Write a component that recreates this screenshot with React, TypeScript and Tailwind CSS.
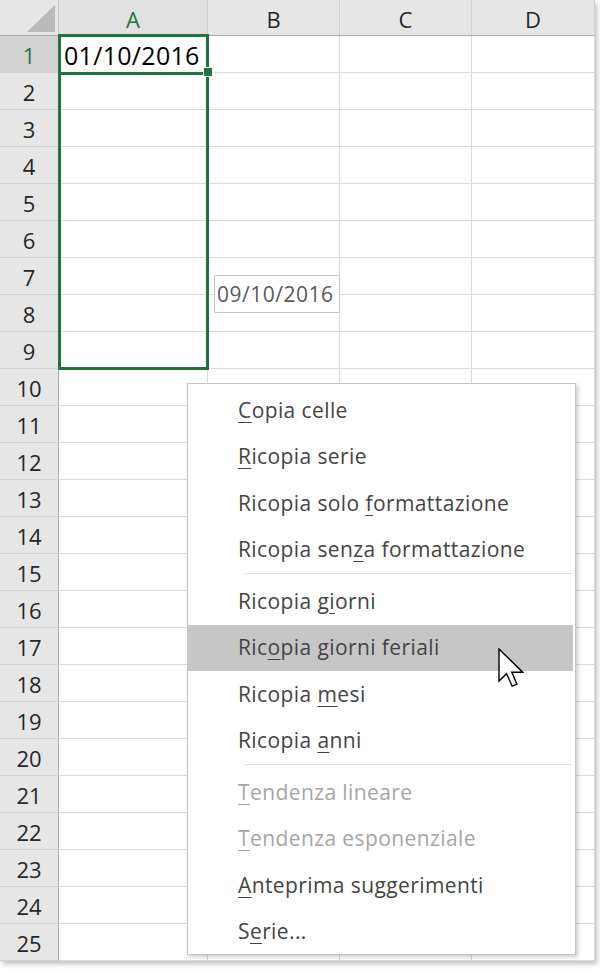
import React from 'react';

type Item = { pre: string; key: string; post: string; disabled?: boolean; active?: boolean } | 'sep';

const menuItems: Item[] = [
  { pre: '', key: 'C', post: 'opia celle' },
  { pre: '', key: 'R', post: 'icopia serie' },
  { pre: 'Ricopia solo ', key: 'f', post: 'ormattazione' },
  { pre: 'Ricopia sen', key: 'z', post: 'a formattazione' },
  'sep',
  { pre: 'Ricopia g', key: 'i', post: 'orni' },
  { pre: 'Ric', key: 'o', post: 'pia giorni feriali', active: true },
  { pre: 'Ricopia ', key: 'm', post: 'esi' },
  { pre: 'Ricopia ', key: 'a', post: 'nni' },
  'sep',
  { pre: '', key: 'T', post: 'endenza lineare', disabled: true },
  { pre: '', key: 'T', post: 'endenza esponenziale', disabled: true },
  { pre: '', key: 'A', post: 'nteprima suggerimenti' },
  { pre: 'S', key: 'e', post: 'rie...' },
];

const columns = [
  { name: 'A', w: 'w-[149px]' },
  { name: 'B', w: 'w-[132px]' },
  { name: 'C', w: 'w-[132px]' },
  { name: 'D', w: 'w-[123px]' },
];

const rows = Array.from({ length: 25 }, (_, i) => i + 1);

const Cursor = () => (
  <svg width="26" height="40" viewBox="-0.5 -0.5 13 20" className="absolute left-[498px] top-[648px]">
    <path
      d="M0 0 L0 16 L3.8 12.4 L6.6 18.6 L9 17.6 L6.4 11.6 L11.8 11.6 Z"
      fill="white"
      stroke="black"
      strokeWidth="0.7"
      strokeLinejoin="miter"
    />
  </svg>
);

export default function App() {
  return (
    <div className="w-[600px] h-[972px] bg-white font-['Open_Sans',sans-serif]">
      <div className="relative w-[595px] h-[961px] overflow-hidden bg-white shadow-[2px_3px_5px_rgba(0,0,0,0.25)]">
        {/* column headers */}
        <div className="flex h-[36px] bg-[#e6e6e6] border-b border-[#ababab]">
          <div className="relative w-[59px] border-r border-[#c8c8c8]">
            <svg width="28" height="27" viewBox="0 0 28 27" className="absolute left-[27px] top-[5px]">
              <polygon points="0,27 28,27 28,0" fill="#b9b9b9" />
            </svg>
          </div>
          {columns.map((c) => (
            <div
              key={c.name}
              className={`${c.w} flex items-center justify-center pt-[3px] border-r border-[#d0d0d0] text-[22px] ${
                c.name === 'A' ? 'bg-[#e1e1e1] text-[#217346]' : 'text-[#262626]'
              }`}
            >
              {c.name}
            </div>
          ))}
        </div>

        {/* rows */}
        {rows.map((r) => (
          <div key={r} className="flex h-[37px]">
            <div
              className={`w-[59px] flex items-center justify-center pt-[3px] border-r border-r-[#ababab] border-b border-b-[#d0d0d0] text-[22px] ${
                r === 1 ? 'bg-[#d2d2d2] text-[#217346]' : 'bg-[#e6e6e6] text-[#262626]'
              }`}
            >
              {r}
            </div>
            {columns.map((c) => (
              <div key={c.name} className={`${c.w} flex items-center border-r border-b border-[#dadada]`}>
                {r === 1 && c.name === 'A' && (
                  <span className="pl-[5px] pt-[3px] text-[25px] tracking-[0.3px] text-black leading-none">
                    01/10/2016
                  </span>
                )}
              </div>
            ))}
          </div>
        ))}

        {/* selection */}
        <div className="absolute left-[58px] top-[34px] w-[151px] h-[336px] border-[3px] border-[#217346]" />
        <div className="absolute left-[58px] top-[72px] w-[151px] h-[3px] bg-[#217346]" />
        <div className="absolute left-[203px] top-[67px] w-[10px] h-[10px] bg-[#217346] border border-white" />

        {/* fill tooltip */}
        <div className="absolute left-[214px] top-[275px] w-[126px] h-[38px] bg-white border border-[#c8c8c8] flex items-center pl-[2px] pt-[1px] text-[21px] tracking-[0.5px] text-[#5a5a5a]">
          09/10/2016
        </div>

        {/* context menu */}
        <div className="absolute left-[187px] top-[383px] w-[389px] h-[572px] bg-white border border-[#c6c6c6] pt-[3px] shadow-[2px_2px_4px_rgba(0,0,0,0.2)]">
          {menuItems.map((it, i) =>
            it === 'sep' ? (
              <div key={i} className="h-[5px] ml-[56px] mr-[2px] border-t border-[#e1e1e1]" />
            ) : (
              <div
                key={i}
                className={`h-[46.5px] mr-[2px] flex items-center pl-[50px] text-[21px] tracking-[0.4px] whitespace-pre ${
                  it.active ? 'bg-[#c6c6c6]' : ''
                } ${it.disabled ? 'text-[#a6a6a6]' : 'text-[#444444]'}`}
              >
                {it.pre}
                <span className="underline decoration-1 underline-offset-[4px]">{it.key}</span>
                {it.post}
              </div>
            )
          )}
        </div>

        <Cursor />
      </div>
    </div>
  );
}
